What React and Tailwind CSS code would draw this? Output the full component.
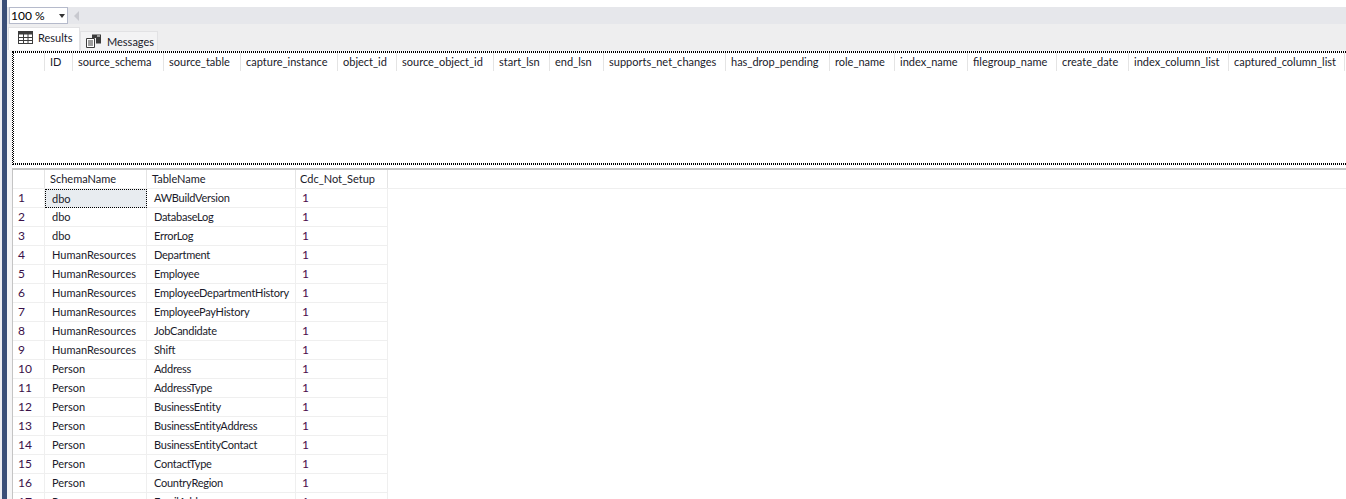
import React from 'react';

const TOP_COLS = [
    ['', 31], ['ID', 28], ['source_schema', 91], ['source_table', 77], ['capture_instance', 97],
    ['object_id', 59], ['source_object_id', 97], ['start_lsn', 56], ['end_lsn', 54],
    ['supports_net_changes', 122], ['has_drop_pending', 104], ['role_name', 65], ['index_name', 73],
    ['filegroup_name', 89], ['create_date', 72], ['index_column_list', 100], ['captured_column_list', 116],
];

const ROWS = [
    ['dbo', 'AWBuildVersion'], ['dbo', 'DatabaseLog'], ['dbo', 'ErrorLog'],
    ['HumanResources', 'Department'], ['HumanResources', 'Employee'],
    ['HumanResources', 'EmployeeDepartmentHistory'], ['HumanResources', 'EmployeePayHistory'],
    ['HumanResources', 'JobCandidate'], ['HumanResources', 'Shift'],
    ['Person', 'Address'], ['Person', 'AddressType'], ['Person', 'BusinessEntity'],
    ['Person', 'BusinessEntityAddress'], ['Person', 'BusinessEntityContact'],
    ['Person', 'ContactType'], ['Person', 'CountryRegion'], ['Person', 'EmailAddress'],
];

function GridIcon() {
    return (
        <svg width="15" height="13" viewBox="0 0 15 13" className="shrink-0">
            <rect x="0.5" y="0.5" width="14" height="12" fill="#fff" stroke="#3c3c3c" />
            <rect x="0.5" y="0.5" width="14" height="3" fill="#3c3c3c" />
            <path d="M5.5 3v9M10 3v9M1 6.5h13M1 9.5h13" stroke="#3c3c3c" />
        </svg>
    );
}

function MessagesIcon() {
    return (
        <svg width="16" height="14" viewBox="0 0 16 14" className="shrink-0">
            <path d="M0.5 4.5h8v9h-8z" fill="#fff" stroke="#3c3c3c" />
            <path d="M2 7h5M2 9h5M2 11h5" stroke="#3c3c3c" />
            <path d="M6 0.5h9v9h-5V4H6z" fill="#3c3c3c" />
            <path d="M11 2h3" stroke="#fff" />
        </svg>
    );
}

export default function App() {
    return (
        <div className="flex h-[499px] w-[1346px] overflow-hidden bg-white text-[11px] leading-[19px] text-[#1a1a2a] font-['Lato','Liberation_Sans',sans-serif]">
            <div className="w-[2px] shrink-0 bg-[#eeeef2]" />
            <div className="w-[5px] shrink-0 bg-[#3b4f78]" />

            <div className="flex min-w-0 flex-1 flex-col">
                <div className="h-[7px] shrink-0 bg-white" />

                {/* zoom toolbar */}
                <div className="flex h-[17px] shrink-0 items-center bg-[#e6e7eb]">
                    <div className="ml-[2px] flex h-[17px] w-[59px] items-center justify-between border border-[#b5bacb] bg-white pl-[1px] pr-[2px]">
                        <span className="text-[12px] leading-none text-black">100 %</span>
                        <span className="h-0 w-0 border-x-[3.5px] border-t-[4px] border-x-transparent border-t-[#333]" />
                    </div>
                    <span className="ml-[6px] h-0 w-0 border-y-[5px] border-r-[5px] border-y-transparent border-r-[#c8c9cf]" />
                </div>

                {/* tabs */}
                <div className="flex h-[26px] shrink-0 items-end bg-[#eeeeef] pl-[1px]">
                    <div className="flex h-[23px] w-[72px] items-center gap-[5px] border-x border-t border-[#e2e2e4] bg-white pb-[3px] pl-[9px]">
                        <GridIcon />
                        <span className="text-[11px] leading-none">Results</span>
                    </div>
                    <div className="flex h-[19px] w-[78px] items-center gap-[5px] border-x border-t border-[#e2e2e4] bg-[#f3f3f4] pl-[5px]">
                        <MessagesIcon />
                        <span className="text-[11px] leading-none">Messages</span>
                    </div>
                </div>

                <div className="flex min-h-0 flex-1 flex-col bg-[#f5f5f6] pl-[5px]">
                    {/* empty result grid */}
                    <div className="mt-[1px] h-[114px] shrink-0 border border-r-0 border-dotted border-black bg-white">
                        <div className="h-full border border-r-0 border-dotted border-black">
                            <div className="flex h-[18px]">
                                {TOP_COLS.map(([name, width], i) => (
                                    <div
                                        key={i}
                                        style={{ width }}
                                        className="shrink-0 overflow-hidden whitespace-nowrap border-r border-[#e4e4e4] pl-[5px] leading-[17px]"
                                    >
                                        {name}
                                    </div>
                                ))}
                            </div>
                        </div>
                    </div>

                    <div className="h-[3px] shrink-0 bg-white" />

                    {/* second result grid */}
                    <div className="min-h-0 flex-1 border-l border-t-2 border-[#c4c4c4] bg-white">
                        <div className="flex h-[19px] border-b border-[#efefef]">
                            <div className="w-[32px] shrink-0 border-r border-[#e4e4e4]" />
                            <div className="w-[102px] shrink-0 border-r border-[#e4e4e4] pl-[5px] leading-[18px]">SchemaName</div>
                            <div className="w-[149px] shrink-0 border-r border-[#e4e4e4] pl-[5px] leading-[18px]">TableName</div>
                            <div className="w-[92px] shrink-0 border-r border-[#e4e4e4] pl-[4px] leading-[18px]">Cdc_Not_Setup</div>
                        </div>
                        {ROWS.map(([schema, table], i) => (
                            <div key={table} className="flex h-[19px] leading-[18px]">
                                <div className="w-[32px] shrink-0 border-b border-r border-[#efefef] pl-[5px] text-[12px] text-[#3a1048]">{i + 1}</div>
                                <div className={`w-[102px] shrink-0 ${i === 0 ? 'border border-dotted border-black bg-[#e8ecf0] pl-[6px]' : 'border-b border-r border-[#efefef] pl-[7px]'}`}>{schema}</div>
                                <div className="w-[149px] shrink-0 border-b border-r border-[#efefef] pl-[7px] tracking-[-0.25px]">{table}</div>
                                <div className="w-[92px] shrink-0 border-b border-r border-[#efefef] pl-[6px] text-[12px] text-[#4b0b4b]">1</div>
                            </div>
                        ))}
                    </div>
                </div>
            </div>
        </div>
    );
}
